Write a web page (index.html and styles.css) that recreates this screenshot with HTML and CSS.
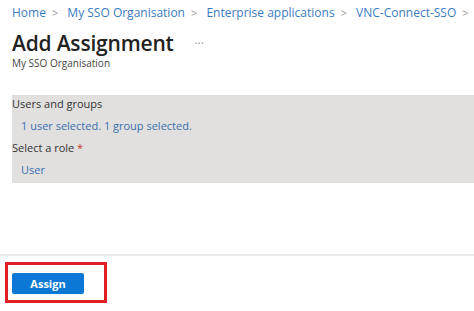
FILE: index.html
```html
<!DOCTYPE html>
<html lang="en">
<head>
  <meta charset="UTF-8" />
  <title>Add Assignment</title>
  <link rel="stylesheet" href="styles.css">
</head>
<body>
  <div class="page">
    <nav class="crumbs">
      <a href="#">Home</a><span class="sep">&gt;</span>
      <a href="#">My SSO Organisation</a><span class="sep">&gt;</span>
      <a href="#">Enterprise applications</a><span class="sep">&gt;</span>
      <a href="#">VNC-Connect-SSO</a><span class="sep">&gt;</span>
    </nav>
    <div class="title-row">
      <h1>Add Assignment</h1>
      <span class="more">...</span>
    </div>
    <div class="subtitle">My SSO Organisation</div>

    <div class="panel">
      <div class="label">Users and groups</div>
      <div class="value">1 user selected. 1 group selected.</div>
      <div class="label">Select a role <span class="req">*</span></div>
      <div class="value">User</div>
    </div>
  </div>

  <div class="footer">
    <div class="highlight">
      <button class="btn">Assign</button>
    </div>
  </div>
</body>
</html>
```

FILE: styles.css
```css
body {
  margin: 0;
  font-family: 'Open Sans', 'Noto Sans', sans-serif;
  color: #323130;
  background: #fff;
  width: 474px;
  height: 311px;
  overflow: hidden;
}
.page {
  padding: 4px 0 0 12px;
  height: 250px;
}
.crumbs {
  font-size: 12px;
  line-height: 18px;
  white-space: nowrap;
}
.crumbs a {
  color: #3a7cc4;
  text-decoration: none;
}
.crumbs .sep {
  color: #9a9a9a;
  margin: 0 6px;
  font-size: 11px;
}
.title-row {
  display: flex;
  align-items: center;
  margin-top: 6px;
  height: 30px;
}
h1 {
  margin: 0;
  font-size: 21px;
  font-weight: 600;
  color: #222;
  letter-spacing: -0.2px;
}
.more {
  margin-left: 21px;
  font-size: 10px;
  color: #777;
  letter-spacing: 0.5px;
  position: relative;
  top: -3px;
}
.subtitle {
  font-size: 10px;
  line-height: 14px;
  color: #444;
  margin-top: -2px;
}
.panel {
  margin-top: 25px;
  background: #e1e0df;
  height: 88px;
}
.label {
  font-size: 11px;
  line-height: 18px;
  color: #333;
}
.value {
  font-size: 11px;
  line-height: 26px;
  color: #3a6fb0;
  padding-left: 9px;
}
.req {
  color: #c0392b;
}
.footer {
  border-top: 2px solid #ebebeb;
  padding: 6px 0 0 5px;
}
.highlight {
  display: inline-block;
  border: 3px solid #e01e26;
  padding: 8px 20px 6px 4px;
}
.btn {
  display: block;
  width: 72px;
  height: 21px;
  background: #0a78d4;
  color: #fff;
  border: none;
  border-radius: 2px;
  font-family: inherit;
  font-size: 11px;
  font-weight: 700;
  padding: 0;
}
```
